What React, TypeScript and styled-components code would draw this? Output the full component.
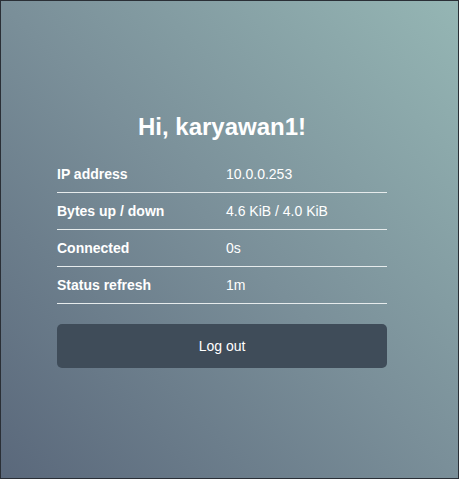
import * as React from "react";
import styled, { createGlobalStyle } from "styled-components";

const GlobalStyle = createGlobalStyle`
  html, body {
    margin: 0;
    padding: 0;
    height: 100%;
  }
  body {
    font-family: "Liberation Sans", Arial, sans-serif;
  }
  #root {
    height: 100%;
  }
`;

const rows = [
  { label: "IP address", value: "10.0.0.253" },
  { label: "Bytes up / down", value: "4.6 KiB / 4.0 KiB" },
  { label: "Connected", value: "0s" },
  { label: "Status refresh", value: "1m" },
];

export default function App() {
  return (
    <>
      <GlobalStyle />
      <Page>
        <Panel>
          <Title>Hi, karyawan1!</Title>
          <Table>
            {rows.map((r) => (
              <Row key={r.label}>
                <Label>{r.label}</Label>
                <Value>{r.value}</Value>
              </Row>
            ))}
          </Table>
          <LogoutButton type="button">Log out</LogoutButton>
        </Panel>
      </Page>
    </>
  );
}

const Page = styled.div`
  box-sizing: border-box;
  width: 459px;
  height: 479px;
  border: 1px solid #2a2f36;
  background: linear-gradient(to top right, #5a687b 0%, #7a8f99 50%, #95b6b4 100%);
  display: flex;
  align-items: center;
  padding: 2px 0 0 56px;
`;

const Panel = styled.div`
  width: 330px;
  display: flex;
  flex-direction: column;
  color: #fff;
`;

const Title = styled.h1`
  margin: 0 0 15px;
  font-size: 24px;
  line-height: 28px;
  font-weight: bold;
  text-align: center;
`;

const Table = styled.div`
  display: flex;
  flex-direction: column;
`;

const Row = styled.div`
  display: grid;
  grid-template-columns: 169px 1fr;
  align-items: center;
  height: 36px;
  border-bottom: 1px solid #e6ebec;
  font-size: 14px;
`;

const Label = styled.span`
  font-weight: bold;
`;

const Value = styled.span`
  font-weight: normal;
`;

const LogoutButton = styled.button`
  margin-top: 20px;
  height: 44px;
  border: none;
  border-radius: 5px;
  background: #3f4c59;
  color: #fff;
  font-family: "Liberation Sans", Arial, sans-serif;
  font-size: 14px;
  cursor: pointer;
`;
